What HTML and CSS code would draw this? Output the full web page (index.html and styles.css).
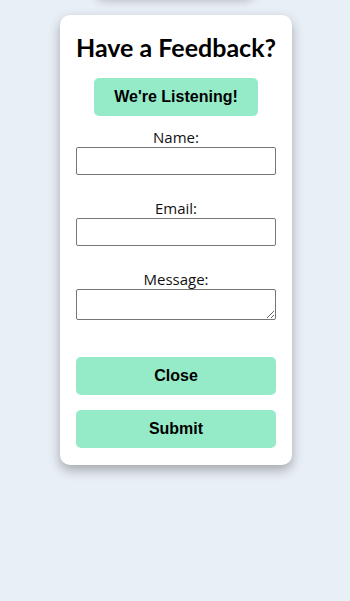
FILE: index.html
```html
<!DOCTYPE html>
<html>
<head>
<meta charset="utf-8">
<link rel="stylesheet" href="styles.css">
</head>
<body>
<div class="top-ghost"></div>
<div class="card">
  <h1 class="title">Have a Feedback?</h1>
  <div class="center"><button class="btn btn-listen">We're Listening!</button></div>
  <form class="form">
    <label class="label" for="name">Name:</label>
    <input class="field" id="name" type="text">
    <label class="label label-gap" for="email">Email:</label>
    <input class="field" id="email" type="email">
    <label class="label label-gap" for="msg">Message:</label>
    <textarea class="field area" id="msg"></textarea>
    <button type="button" class="btn btn-wide btn-close">Close</button>
    <button type="button" class="btn btn-wide btn-submit">Submit</button>
  </form>
</div>
</body>
</html>
```
FILE: styles.css
```css
html, body {
  margin: 0;
  padding: 0;
}
body {
  background: #e9eff7;
  width: 350px;
  height: 601px;
  overflow: hidden;
  position: relative;
  font-family: "Open Sans", "Noto Sans", sans-serif;
}
.top-ghost {
  position: absolute;
  left: 95px;
  top: -40px;
  width: 160px;
  height: 40px;
  border-radius: 10px;
  background: #e9eff7;
  box-shadow: 0 2px 8px rgba(0, 0, 0, 0.18);
}
.card {
  box-sizing: border-box;
  width: 232px;
  margin: 15px 0 0 60px;
  padding: 18px 16px 17px;
  background: #ffffff;
  border-radius: 10px;
  box-shadow: 0 5px 12px rgba(0, 0, 0, 0.3);
}
.title {
  margin: 0 -12px;
  font-family: "Lato", "Open Sans", sans-serif;
  font-weight: 700;
  font-size: 25px;
  line-height: 28px;
  text-align: center;
  white-space: nowrap;
  color: #000;
}
.center {
  display: flex;
  justify-content: center;
  margin-top: 17px;
}
.btn {
  border: none;
  background: #95ebc8;
  border-radius: 5px;
  font-family: "Liberation Sans", Arial, sans-serif;
  font-weight: 700;
  font-size: 16px;
  color: #000;
  height: 38px;
  padding: 0;
  cursor: pointer;
}
.btn-listen {
  width: 164px;
}
.form {
  display: flex;
  flex-direction: column;
  margin-top: 11px;
}
.label {
  display: block;
  text-align: center;
  font-size: 15px;
  line-height: 20px;
  height: 20px;
  color: #111;
}
.label-gap {
  margin-top: 23px;
}
.field {
  box-sizing: border-box;
  width: 200px;
  height: 28px;
  margin: 0;
  border: 1px solid #767676;
  border-radius: 2px;
  background: #fff;
  font-size: 14px;
}
.area {
  height: 31px;
  resize: vertical;
}
.btn-wide {
  width: 200px;
}
.btn-close {
  margin-top: 37px;
}
.btn-submit {
  margin-top: 15px;
}
```
